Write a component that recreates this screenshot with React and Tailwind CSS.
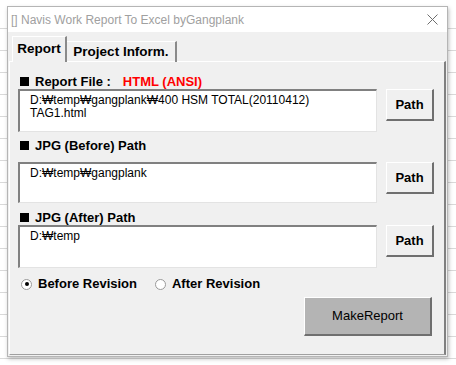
import React from "react";

const sunken =
  "bg-white border-t-2 border-l-2 border-b border-r border-t-[#808080] border-l-[#808080] border-b-[#e3e3e3] border-r-[#e3e3e3]";
const raised =
  "border-t border-l border-b-2 border-r-2 border-t-white border-l-white border-b-[#6f6f6f] border-r-[#6f6f6f]";

function Label({ children }) {
  return (
    <div className="flex items-center h-[16px] pl-[10px] text-[13px] font-bold text-black leading-none">
      <span className="w-[9px] h-[9px] bg-black mr-[6px]" />
      {children}
    </div>
  );
}

function PathRow({ lines, height }) {
  return (
    <div className="flex items-start pl-[8px] gap-[9px]">
      <div
        className={`w-[359px] ${sunken} pl-[10px] pt-[3px] text-[12px] leading-[13px] text-black`}
        style={{ height }}
      >
        {lines.map((l, i) => (
          <div key={i}>{l}</div>
        ))}
      </div>
      <button
        className={`w-[48px] h-[32px] bg-[#f0f0f0] ${raised} text-[13px] font-bold text-black`}
      >
        Path
      </button>
    </div>
  );
}

function Radio({ checked, label }) {
  return (
    <div className="flex items-center gap-[6px]">
      <span className="w-[11px] h-[11px] rounded-full bg-white border border-[#9a9a9a] flex items-center justify-center">
        {checked && <span className="w-[4px] h-[4px] rounded-full bg-black" />}
      </span>
      <span className="text-[13px] font-bold text-black">{label}</span>
    </div>
  );
}

export default function App() {
  return (
    <div
      className="w-[456px] h-[365px] pt-[6px] pl-[7px] bg-white bg-[repeating-linear-gradient(to_bottom,transparent_0px,transparent_21px,#d9d9d9_21px,#d9d9d9_22px)] bg-[position:0_7px]"
      style={{ fontFamily: '"Liberation Sans", "DejaVu Sans", Arial, sans-serif' }}
    >
      <div className="w-[441px] h-[351px] flex flex-col border border-[#b5b5b5] shadow-[1px_2px_4px_rgba(0,0,0,0.25)] bg-[#f0f0f0]">
        {/* title bar */}
        <div className="h-[25px] bg-white flex items-center justify-between pl-[3px] pr-[9px]">
          <span className="text-[12px] text-[#a0a0a0]">[] Navis Work Report To Excel byGangplank</span>
          <svg width="11" height="11" viewBox="0 0 11 11">
            <path d="M0.5 0.5 L10.5 10.5 M10.5 0.5 L0.5 10.5" stroke="#6e6e6e" strokeWidth="1" />
          </svg>
        </div>

        <div className="flex-1 flex flex-col px-[1px] pt-[5px] pb-[1px]">
          {/* tabs */}
          <div className="flex items-end h-[25px] pl-[3px] relative z-10 -mb-[1px]">
            <div className="w-[55px] h-[26px] bg-[#f0f0f0] border-t border-l border-white border-r-2 border-r-[#8a8a8a] flex items-center justify-center text-[13.5px] font-bold text-black">
              Report
            </div>
            <div className="w-[110px] h-[21px] border-t border-white border-r-2 border-r-[#8a8a8a] flex items-center justify-center text-[13.5px] font-bold text-black">
              Project Inform.
            </div>
          </div>

          {/* panel */}
          <div className="flex-1 flex flex-col border-t border-l border-white border-r-2 border-r-[#808080] border-b border-b-[#a0a0a0] pt-[11px]">
            <Label>
              Report File :<span className="ml-[12px] text-[#ff0000]">HTML (ANSI)</span>
            </Label>
            <PathRow
              lines={["D:\u20A9temp\u20A9gangplank\u20A9400 HSM TOTAL(20110412)", "TAG1.html"]}
              height={43}
            />
            <div className="h-[5px]" />
            <Label>JPG (Before) Path</Label>
            <div className="h-[9px]" />
            <PathRow lines={["D:\u20A9temp\u20A9gangplank"]} height={41} />
            <div className="h-[6px]" />
            <Label>JPG (After) Path</Label>
            <PathRow lines={["D:\u20A9temp"]} height={43} />
            <div className="h-[8px]" />
            <div className="flex items-center h-[16px] pl-[11px] gap-[18px]">
              <Radio checked label="Before Revision" />
              <Radio label="After Revision" />
            </div>
            <div className="flex justify-end pr-[12px] mt-[5px]">
              <button className={`w-[128px] h-[39px] bg-[#b4b4b4] ${raised} text-[13px] text-black`}>
                MakeReport
              </button>
            </div>
          </div>
        </div>
      </div>
    </div>
  );
}
